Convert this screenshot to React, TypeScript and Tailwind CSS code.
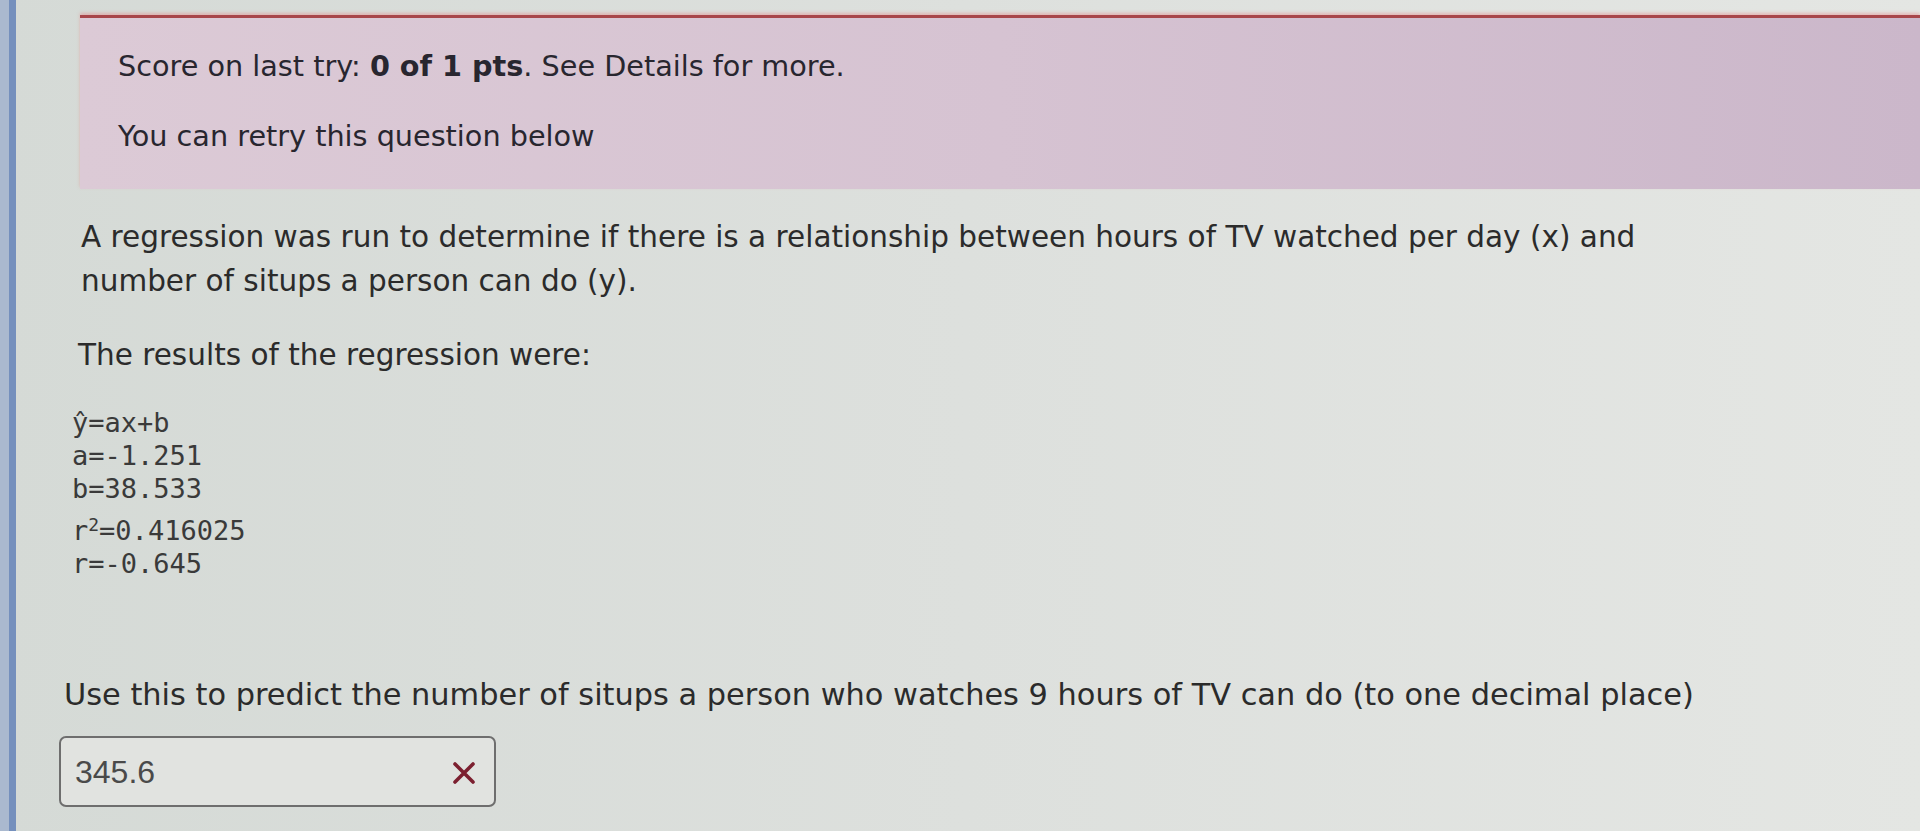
const sans = "font-['DejaVu_Sans','Verdana',sans-serif]";

function RetryBanner() {
  return (
    <div className="ml-16 border-t-[3px] border-[#a8464a] bg-gradient-to-r from-[#dccad6] via-[#d6c3d2] to-[#cbb7ca] pl-[38px] pt-[30px] pb-[35px] shadow-[0_-2px_3px_rgba(230,140,140,0.5)]">
      <p className={`${sans} text-[28.7px] leading-[36px] text-[#28262f]`}>
        Score on last try: <span className="font-bold">0 of 1 pts</span>. See Details for more.
      </p>
      <p className={`${sans} mt-[34px] text-[28.7px] leading-[36px] text-[#28262f]`}>
        You can retry this question below
      </p>
    </div>
  );
}

function Results() {
  const mono = "font-['DejaVu_Sans_Mono',monospace] text-[27px] text-[#3a3a3a]";
  return (
    <div className={`${mono} ml-[56px] mt-[29px]`}>
      <div className="leading-[33px]">ŷ=ax+b</div>
      <div className="leading-[33px]">a=-1.251</div>
      <div className="leading-[33px]">b=38.533</div>
      <div className="pt-[9px] leading-[33px]">
        r<sup className="text-[18px]">2</sup>=0.416025
      </div>
      <div className="leading-[33px]">r=-0.645</div>
    </div>
  );
}

function AnswerBox() {
  return (
    <div className="ml-[43px] mt-[19px] flex h-[71px] w-[437px] items-center justify-between rounded-[7px] border-2 border-[#6e6e6e] bg-[#e1e3e0] pl-[14px] pr-[18px]">
      <span className="font-['Liberation_Sans',Arial,sans-serif] text-[32px] text-[#4a4a4a]">345.6</span>
      <svg width="24" height="24" viewBox="0 0 24 24" className="mt-[2px]">
        <path d="M3 3 L21 21 M21 3 L3 21" stroke="#7c2030" strokeWidth="3.6" strokeLinecap="round" />
      </svg>
    </div>
  );
}

export default function App() {
  return (
    <div className="flex min-h-screen w-full bg-gradient-to-r from-[#d5dad6] via-[#dde0dd] to-[#e4e6e3]">
      {/* window edge */}
      <div className="flex w-[16px] shrink-0">
        <div className="w-[9px] bg-[#aab9cf]" />
        <div className="w-[7px] bg-[#7590bd]" />
      </div>

      <div className="flex-1 pt-[15px]">
        <RetryBanner />

        <div className={`${sans} text-[29.5px] text-[#2b2b2b]`}>
          <p className="ml-[65px] mt-[26px] leading-[44px]">
            A regression was run to determine if there is a relationship between hours of TV watched per day (x) and
            <br />
            number of situps a person can do (y).
          </p>
          <p className="ml-[62px] mt-[30px] leading-[44px]">The results of the regression were:</p>
        </div>

        <Results />

        <p className={`${sans} ml-[48px] mt-[93px] text-[30.4px] leading-[44px] text-[#2b2b2b]`}>
          Use this to predict the number of situps a person who watches 9 hours of TV can do (to one decimal place)
        </p>

        <AnswerBox />
      </div>
    </div>
  );
}
